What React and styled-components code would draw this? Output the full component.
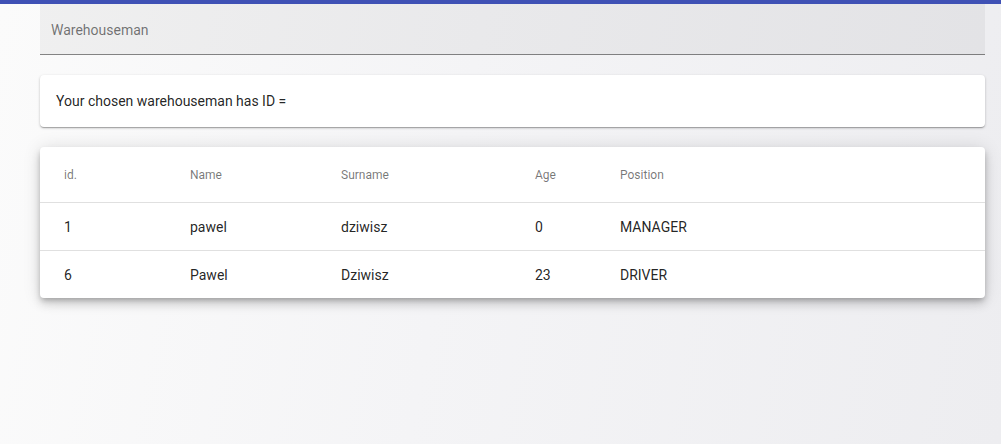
import styled, { createGlobalStyle } from "styled-components";

const GlobalStyle = createGlobalStyle`
  html, body {
    margin: 0;
    padding: 0;
    height: 100%;
  }
  body {
    font-family: Roboto, "Liberation Sans", Arial, sans-serif;
    background: linear-gradient(100deg, #fbfbfb 0%, #f4f4f6 45%, #ededf0 100%);
    min-height: 444px;
  }
`;

const TopBar = styled.div`
  height: 4px;
  background-color: #3f51b5;
`;

const Content = styled.div`
  display: flex;
  flex-direction: column;
  gap: 20px;
  margin: 0 16px 0 40px;
`;

const FilledField = styled.div`
  height: 50px;
  display: flex;
  align-items: center;
  padding: 0 11px;
  background-color: rgba(0, 0, 0, 0.045);
  border-bottom: 1px solid rgba(0, 0, 0, 0.45);
`;

const FieldLabel = styled.span`
  font-size: 14px;
  color: rgba(0, 0, 0, 0.54);
  margin-top: 2px;
`;

const Paper = styled.div`
  background-color: #fff;
  border-radius: 4px;
  box-shadow: ${({ $elevated }) =>
    $elevated
      ? "0 3px 5px -1px rgba(0,0,0,0.2), 0 6px 10px 0 rgba(0,0,0,0.14), 0 1px 18px 0 rgba(0,0,0,0.12)"
      : "0 1px 3px 0 rgba(0,0,0,0.2), 0 1px 1px 0 rgba(0,0,0,0.14), 0 2px 1px -1px rgba(0,0,0,0.12)"};
`;

const InfoText = styled.p`
  margin: 0;
  padding: 17px 16px;
  font-size: 14px;
  line-height: 18px;
  color: rgba(0, 0, 0, 0.87);
`;

const Table = styled.table`
  width: 100%;
  border-collapse: collapse;
`;

const HeadCell = styled.th`
  height: 55px;
  padding: 0 24px;
  text-align: left;
  font-size: 12px;
  font-weight: 400;
  color: rgba(0, 0, 0, 0.54);
  border-bottom: 1px solid rgba(224, 224, 224, 1);
  width: ${({ $w }) => $w || "auto"};
`;

const Cell = styled.td`
  height: 47px;
  padding: 0 24px;
  font-size: 14px;
  color: rgba(0, 0, 0, 0.87);
  border-bottom: ${({ $last }) => ($last ? "none" : "1px solid rgba(224, 224, 224, 1)")};
`;

const columns = [
  { label: "id.", w: "78px" },
  { label: "Name", w: "103px" },
  { label: "Surname", w: "146px" },
  { label: "Age", w: "37px" },
  { label: "Position" },
];

const rows = [
  { id: 1, name: "pawel", surname: "dziwisz", age: 0, position: "MANAGER" },
  { id: 6, name: "Pawel", surname: "Dziwisz", age: 23, position: "DRIVER" },
];

export default function App() {
  return (
    <>
      <GlobalStyle />
      <TopBar />
      <Content>
        <FilledField>
          <FieldLabel>Warehouseman</FieldLabel>
        </FilledField>
        <Paper>
          <InfoText>Your chosen warehouseman has ID =</InfoText>
        </Paper>
        <Paper $elevated>
          <Table>
            <thead>
              <tr>
                {columns.map((c) => (
                  <HeadCell key={c.label} $w={c.w}>
                    {c.label}
                  </HeadCell>
                ))}
              </tr>
            </thead>
            <tbody>
              {rows.map((r, i) => {
                const last = i === rows.length - 1;
                return (
                  <tr key={r.id}>
                    <Cell $last={last}>{r.id}</Cell>
                    <Cell $last={last}>{r.name}</Cell>
                    <Cell $last={last}>{r.surname}</Cell>
                    <Cell $last={last}>{r.age}</Cell>
                    <Cell $last={last}>{r.position}</Cell>
                  </tr>
                );
              })}
            </tbody>
          </Table>
        </Paper>
      </Content>
    </>
  );
}
